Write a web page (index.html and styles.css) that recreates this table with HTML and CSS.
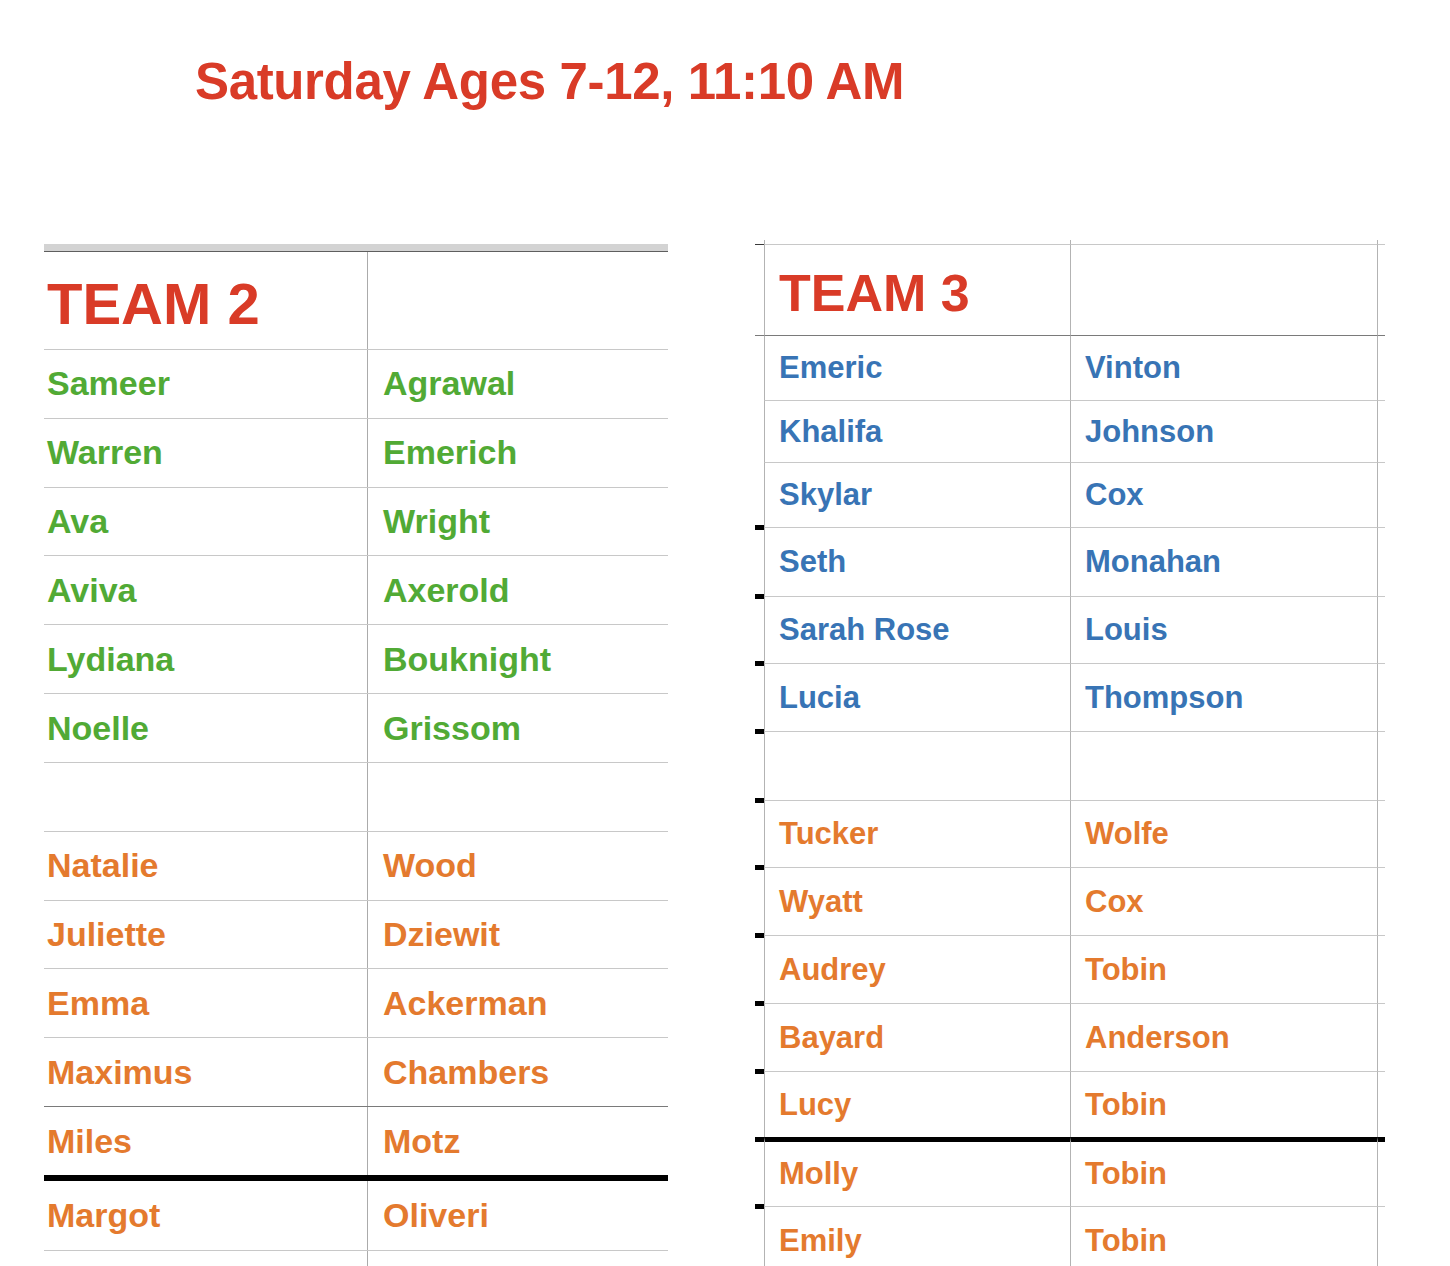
FILE: index.html
```html
<!DOCTYPE html>
<html>
<head>
<meta charset="utf-8">
<title>Saturday Ages 7-12</title>
<link rel="stylesheet" href="styles.css">
</head>
<body>
<h1 class="title">Saturday Ages 7-12, 11:10 AM</h1>
<div class="tables">
  <div class="team2">
    <div class="band"></div>
    <div class="t2row t2head"><div class="c">TEAM 2</div><div class="c"></div></div>
    <div class="t2row green"><div class="c">Sameer</div><div class="c">Agrawal</div></div>
    <div class="t2row green"><div class="c">Warren</div><div class="c">Emerich</div></div>
    <div class="t2row green"><div class="c">Ava</div><div class="c">Wright</div></div>
    <div class="t2row green"><div class="c">Aviva</div><div class="c">Axerold</div></div>
    <div class="t2row green"><div class="c">Lydiana</div><div class="c">Bouknight</div></div>
    <div class="t2row green"><div class="c">Noelle</div><div class="c">Grissom</div></div>
    <div class="t2row"><div class="c"></div><div class="c"></div></div>
    <div class="t2row orange"><div class="c">Natalie</div><div class="c">Wood</div></div>
    <div class="t2row orange"><div class="c">Juliette</div><div class="c">Dziewit</div></div>
    <div class="t2row orange"><div class="c">Emma</div><div class="c">Ackerman</div></div>
    <div class="t2row orange"><div class="c">Maximus</div><div class="c">Chambers</div></div>
    <div class="t2row orange dark"><div class="c">Miles</div><div class="c">Motz</div></div>
    <div class="t2row orange thick"><div class="c">Margot</div><div class="c">Oliveri</div></div>
    <div class="t2row last"><div class="c"></div><div class="c"></div></div>
  </div>

  <div class="team3">
    <div class="t3row stub"><div class="g"></div><div class="v"></div><div class="v"></div><div class="v"></div></div>
    <div class="t3row t3head h91"><div class="g tk1"></div><div class="v c">TEAM 3</div><div class="v"></div><div class="v"></div></div>
    <div class="t3row blue dark h65"><div class="g"></div><div class="v c">Emeric</div><div class="v c">Vinton</div><div class="v"></div></div>
    <div class="t3row blue h62"><div class="g"></div><div class="v c">Khalifa</div><div class="v c">Johnson</div><div class="v"></div></div>
    <div class="t3row blue h65"><div class="g"></div><div class="v c">Skylar</div><div class="v c">Cox</div><div class="v"></div></div>
    <div class="t3row blue h69"><div class="g tk"></div><div class="v c">Seth</div><div class="v c">Monahan</div><div class="v"></div></div>
    <div class="t3row blue h67"><div class="g tk"></div><div class="v c">Sarah Rose</div><div class="v c">Louis</div><div class="v"></div></div>
    <div class="t3row blue h68"><div class="g tk"></div><div class="v c">Lucia</div><div class="v c">Thompson</div><div class="v"></div></div>
    <div class="t3row h69"><div class="g tk"></div><div class="v c"></div><div class="v c"></div><div class="v"></div></div>
    <div class="t3row orange h67"><div class="g tk"></div><div class="v c">Tucker</div><div class="v c">Wolfe</div><div class="v"></div></div>
    <div class="t3row orange h68"><div class="g tk"></div><div class="v c">Wyatt</div><div class="v c">Cox</div><div class="v"></div></div>
    <div class="t3row orange h68"><div class="g tk"></div><div class="v c">Audrey</div><div class="v c">Tobin</div><div class="v"></div></div>
    <div class="t3row orange h68"><div class="g tk"></div><div class="v c">Bayard</div><div class="v c">Anderson</div><div class="v"></div></div>
    <div class="t3row orange h66"><div class="g tk"></div><div class="v c">Lucy</div><div class="v c">Tobin</div><div class="v"></div></div>
    <div class="t3row orange thick h69"><div class="g"></div><div class="v c">Molly</div><div class="v c">Tobin</div><div class="v"></div></div>
    <div class="t3row orange cut h60"><div class="g tk"></div><div class="v c">Emily</div><div class="v c">Tobin</div><div class="v"></div></div>
  </div>
</div>
</body>
</html>
```

FILE: styles.css
```css
* { box-sizing: border-box; }

body {
  margin: 0;
  background: #ffffff;
  font-family: "Liberation Sans", Arial, Helvetica, sans-serif;
  font-weight: bold;
  height: 1266px;
  overflow: hidden;
}

.title {
  margin: 0;
  padding: 52px 0 0 195px;
  font-size: 51px;
  line-height: 60px;
  letter-spacing: -0.35px;
  font-weight: bold;
  color: #d93b27;
}

.tables {
  display: flex;
  align-items: flex-start;
  gap: 87px;
  padding-left: 44px;
  margin-top: 128px;
}

/* ---------- TEAM 2 ---------- */
.team2 {
  width: 624px;
  margin-top: 4px;
}

.band {
  height: 8px;
  background: #d3d3d3;
  border-bottom: 1px solid #5e5e5e;
}

.t2row {
  display: grid;
  grid-template-columns: 323px 301px;
  height: 68.83px;
  border-top: 1px solid #c8c8c8;
}

.t2row .c {
  display: flex;
  align-items: center;
  padding-left: 3px;
  font-size: 34px;
  white-space: nowrap;
}

.t2row .c + .c {
  border-left: 1px solid #ababab;
  padding-left: 15px;
}

.t2head {
  height: 97px;
  border-top: none;
}

.t2head .c {
  font-size: 58px;
  color: #d93b27;
  padding-top: 6px;
}

.t2row.dark { border-top-color: #7a7a7a; }

.t2row.thick {
  height: 75px;
  border-top: 6px solid #000;
}

.t2row.last { height: 16px; }

/* ---------- TEAM 3 ---------- */
.team3 {
  width: 630px;
}

.t3row {
  display: grid;
  grid-template-columns: 9px 306px 307px 8px;
}

.t3row .g {
  position: relative;
}

.t3row .v {
  border-left: 1px solid #b3b3b3;
  border-top: 1px solid #c8c8c8;
}

.t3row .c {
  display: flex;
  align-items: center;
  padding-left: 14px;
  font-size: 31px;
  white-space: nowrap;
}

.t3row.cut .c { padding-top: 8px; }

.t3row.stub { height: 4px; }
.t3row.stub .v { border-top: none; }

.t3head .c {
  font-size: 52px;
  color: #d93b27;
  padding-top: 5px;
}

.t3row .g.tk1 { border-top: 1px solid #3a3a3a; }

.t3row .g.tk::before {
  content: "";
  position: absolute;
  left: 0;
  top: -2px;
  width: 9px;
  height: 5px;
  background: #000;
}

.t3row.dark .v,
.t3row.dark .g { border-top: 1px solid #7a7a7a; }

.t3row.thick .v,
.t3row.thick .g { border-top: 5px solid #000; }

.h60 { height: 60px; }
.h62 { height: 62px; }
.h65 { height: 65px; }
.h66 { height: 66px; }
.h67 { height: 67px; }
.h68 { height: 68px; }
.h69 { height: 69px; }
.h91 { height: 91px; }

/* ---------- colours ---------- */
.green { color: #51aa35; }
.orange { color: #e47a2e; }
.blue { color: #3874b5; }
```
